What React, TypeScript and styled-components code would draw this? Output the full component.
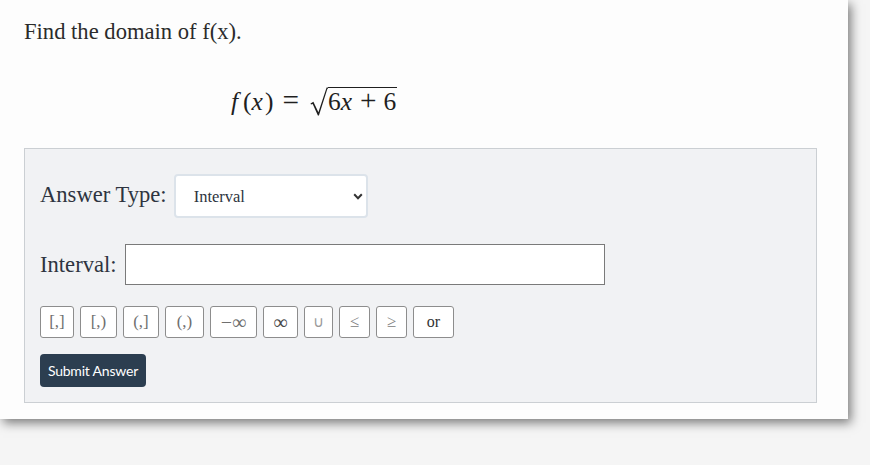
import styled, { createGlobalStyle } from "styled-components";

const GlobalStyle = createGlobalStyle`
  html, body {
    margin: 0;
    padding: 0;
    background: #f5f5f5;
  }
  body {
    min-height: 465px;
  }
  * {
    box-sizing: border-box;
  }
`;

const Card = styled.div`
  width: 848px;
  height: 419px;
  background: #fdfdfd;
  padding: 19px 31px 15px 24px;
  box-shadow: 3px 4px 10px rgba(0, 0, 0, 0.5);
  font-family: "Liberation Serif", "Times New Roman", serif;
  color: #2b2b2b;
`;

const Prompt = styled.p`
  margin: 0;
  font-size: 22.6px;
  line-height: 26px;
`;

const MathLine = styled.div`
  margin-top: 42px;
  padding-left: 207px;
  font-size: 25.5px;
  line-height: 28px;
  color: #1f1f1f;
  white-space: nowrap;
`;

const Var = styled.i<{ $after?: number }>`
  font-style: italic;
  margin-right: ${(p) => p.$after ?? 0}px;
`;

const Op = styled.span<{ $left: number; $right: number }>`
  font-size: 1.15em;
  line-height: 0;
  margin: 0 ${(p) => p.$right}px 0 ${(p) => p.$left}px;
`;

const Sqrt = styled.span`
  display: inline-block;
  position: relative;
  padding-left: 18px;
`;

const Radical = styled.svg`
  position: absolute;
  left: 0;
  top: 0;
  width: 18px;
  height: 30px;
`;

const Radicand = styled.span`
  display: inline-block;
  border-top: 1.3px solid #1f1f1f;
  padding-top: 2px;
  padding-right: 1px;
  line-height: 24px;
`;

const Panel = styled.div`
  margin-top: 32px;
  background: #f1f2f4;
  border: 1px solid #cbcfd3;
  padding: 25px 15px 15px 15px;
`;

const FieldRow = styled.div<{ $align: string; $gap: number; $top?: number }>`
  display: flex;
  align-items: ${(p) => p.$align};
  gap: ${(p) => p.$gap}px;
  margin-top: ${(p) => p.$top ?? 0}px;
`;

const Label = styled.label`
  font-size: 22.6px;
  line-height: 26px;
  color: #2e3440;
`;

const SelectWrap = styled.span`
  position: relative;
  display: inline-block;
`;

const Select = styled.select`
  appearance: none;
  width: 194px;
  height: 44px;
  border: 2px solid #dce3ea;
  border-radius: 4px;
  background: #fff;
  padding: 0 18px;
  font-family: "Liberation Serif", "Times New Roman", serif;
  font-size: 16.5px;
  color: #2e3440;
  outline: none;
`;

const Chevron = styled.svg`
  position: absolute;
  right: 5px;
  top: 19px;
  width: 10px;
  height: 7px;
  pointer-events: none;
`;

const TextInput = styled.input`
  width: 480px;
  height: 41px;
  border: 1px solid #7a7a7a;
  background: #fff;
  padding: 0 8px;
  font-size: 16px;
  outline: none;
`;

const Palette = styled.div`
  display: flex;
  gap: 6px;
  margin-top: 21px;
`;

const SymbolButton = styled.button<{ $w: number; $color?: string; $size?: number }>`
  width: ${(p) => p.$w}px;
  height: 32px;
  padding: 0;
  background: #fff;
  border: 1px solid #8d8d8d;
  border-radius: 3px;
  font-family: "Liberation Serif", "Times New Roman", serif;
  font-size: ${(p) => p.$size ?? 17}px;
  color: ${(p) => p.$color ?? "#6f6f6f"};
  cursor: pointer;
`;

const SubmitButton = styled.button`
  margin-top: 16px;
  width: 106px;
  height: 33px;
  border: none;
  border-radius: 4px;
  background: #2c3e50;
  color: #fff;
  font-family: Lato, "Open Sans", sans-serif;
  font-size: 14px;
  letter-spacing: -0.2px;
  padding: 0;
  cursor: pointer;
`;

const symbols = [
  { label: "[,]", w: 34 },
  { label: "[,)", w: 37 },
  { label: "(,]", w: 36 },
  { label: "(,)", w: 39 },
  { label: "−∞", w: 47, size: 20 },
  { label: "∞", w: 35, size: 20, color: "#4a4a4a" },
  { label: "∪", w: 29, size: 15, color: "#9a9a9a" },
  { label: "≤", w: 31, color: "#808080" },
  { label: "≥", w: 31, color: "#808080" },
  { label: "or", w: 41, size: 16, color: "#333" },
];

export default function App() {
  return (
    <>
      <GlobalStyle />
      <Card>
        <Prompt>Find the domain of f(x).</Prompt>
        <MathLine>
          <Var $after={5}>f</Var>(<Var $after={2}>x</Var>)
          <Op $left={9} $right={11}>=</Op>
          <Sqrt>
            <Radical viewBox="0 0 18 30">
              <path
                d="M0.5 16.4 L3.4 14.8 L8.4 25.2 L16.6 0.4 L18 0.4 L18 1.7 L17.4 1.7 L8.9 28.6 L7.9 28.6 L2.7 17 L1 17.6 Z"
                fill="#1f1f1f"
              />
            </Radical>
            <Radicand>
              6<Var $after={1}>x</Var>
              <Op $left={7} $right={7}>+</Op>6
            </Radicand>
          </Sqrt>
        </MathLine>
        <Panel>
          <FieldRow $align="baseline" $gap={7}>
            <Label>Answer Type:</Label>
            <SelectWrap>
              <Select defaultValue="interval">
                <option value="interval">Interval</option>
                <option value="inequality">Inequality</option>
              </Select>
              <Chevron viewBox="0 0 10 7">
                <polyline
                  points="1.2,1.3 5,5.2 8.8,1.3"
                  fill="none"
                  stroke="#333"
                  strokeWidth="2"
                />
              </Chevron>
            </SelectWrap>
          </FieldRow>
          <FieldRow $align="center" $gap={8} $top={26}>
            <Label>Interval:</Label>
            <TextInput type="text" />
          </FieldRow>
          <Palette>
            {symbols.map((s) => (
              <SymbolButton key={s.label} $w={s.w} $size={s.size} $color={s.color}>
                {s.label}
              </SymbolButton>
            ))}
          </Palette>
          <SubmitButton>Submit Answer</SubmitButton>
        </Panel>
      </Card>
    </>
  );
}
